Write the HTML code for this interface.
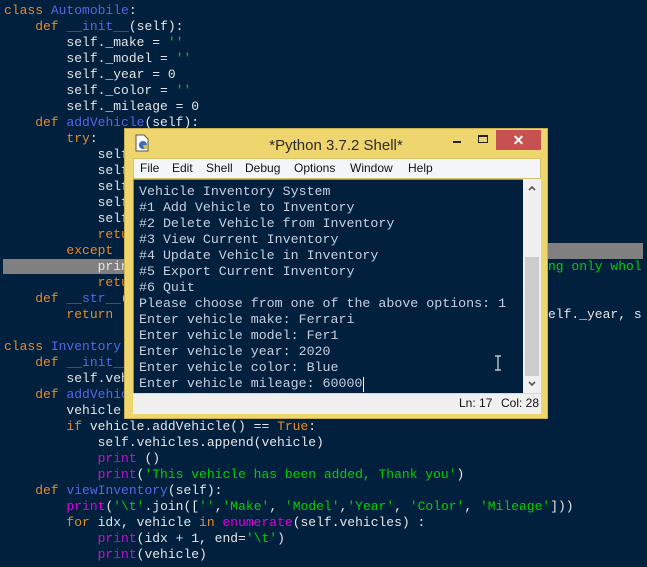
<!DOCTYPE html>
<html><head><meta charset="utf-8"><style>
*{margin:0;padding:0}
body{width:647px;height:567px;background:#00203e;position:relative;overflow:hidden;font-family:"Liberation Mono",monospace}
pre{position:absolute;left:4px;top:-13px;font:13px/16px "Liberation Mono",monospace;color:#e6e6e6;white-space:pre}
.k{color:#f08a1e}.b{color:#5566e8}.s{color:#00d000}.p{color:#e000e0}
.gr{position:absolute;background:#808080}
.abs{position:absolute;font:13px/16px "Liberation Mono",monospace;white-space:pre}
#win{position:absolute;left:124px;top:128px;width:424px;height:291px;background:#efd56e;border:1px solid #c9b050;box-sizing:border-box}
#title{position:absolute;left:0;right:0;top:8px;text-align:center;font:15px "Liberation Sans",sans-serif;color:#2b2b2b}
#close{position:absolute;left:371px;top:1px;width:45px;height:20px;background:#c75050;color:#fff;font:bold 14px/20px "Liberation Sans",sans-serif;text-align:center}
#menu{position:absolute;left:8px;top:29px;width:408px;height:21px;background:#f4f5f8;border:1px solid #d6c26a;box-sizing:border-box;font:12px/19px "Liberation Sans",sans-serif;color:#111}
#menu span{position:absolute;top:0}
#txt{position:absolute;left:8px;top:50px;width:390px;height:214px;background:#00203e;border-left:1px solid #7a8aa0;border-top:1px solid #7a8aa0;box-sizing:border-box}
#txt div{position:absolute;left:5px;top:4px;font:13.3px/16px "Liberation Mono",monospace;color:#c6d0e2;white-space:pre}
#sb{position:absolute;left:398px;top:50px;width:18px;height:214px;background:#f0f0f0}
#status{position:absolute;left:8px;top:264px;width:408px;height:20px;background:#f0f0f0;border-top:1px solid #d8d8d8;font:12px/19px "Liberation Sans",sans-serif;color:#111}
</style></head><body>
<div class="gr" style="left:3px;top:259px;width:121px;height:15px"></div>
<div class="gr" style="left:548px;top:243px;width:95px;height:16px"></div>
<pre><span class="s">  '                                      '      '</span>
<span class="k">class</span> <span class="b">Automobile</span>:
    <span class="k">def</span> <span class="b">__init__</span>(self):
        self._make = <span class="s">''</span>
        self._model = <span class="s">''</span>
        self._year = 0
        self._color = <span class="s">''</span>
        self._mileage = 0
    <span class="k">def</span> <span class="b">addVehicle</span>(self):
        <span class="k">try</span>:
            self
            self
            self
            self
            self
            <span class="k">return</span>
        <span class="k">except</span>
            print
            <span class="k">return</span>
    <span class="k">def</span> <span class="b">__str__</span>(self):
        <span class="k">return</span>

<span class="k">class</span> <span class="b">Inventory</span>:
    <span class="k">def</span> <span class="b">__init__</span>(self):
        self.vehicles = []
    <span class="k">def</span> <span class="b">addVehicle</span>(self):
        vehicle = Automobile()
        <span class="k">if</span> vehicle.addVehicle() == <span class="k">True</span>:
            self.vehicles.append(vehicle)
            <span class="p">print</span> ()
            <span class="p">print</span>(<span class="s">'This vehicle has been added, Thank you'</span>)
    <span class="k">def</span> <span class="b">viewInventory</span>(self):
        <span class="p">print</span>(<span class="s">'\t'</span>.join([<span class="s">''</span>,<span class="s">'Make'</span>, <span class="s">'Model'</span>,<span class="s">'Year'</span>, <span class="s">'Color'</span>, <span class="s">'Mileage'</span>]))
        <span class="k">for</span> idx, vehicle <span class="k">in</span> <span class="p">enumerate</span>(self.vehicles) :
            <span class="p">print</span>(idx + 1, end=<span class="s">'\t'</span>)
            <span class="p">print</span>(vehicle)</pre>
<div class="abs s" style="left:548px;top:259px">ng only whol</div>
<div class="abs" style="left:548px;top:307px;color:#e6e6e6">elf._year, s</div>
<div id="win">
 <svg style="position:absolute;left:10px;top:5px" width="17" height="18" viewBox="0 0 17 18"><path d="M1 1h8l4 4v12H1z" fill="#fff" stroke="#555"/><circle cx="8" cy="11" r="4" fill="#3a6cb0"/><path d="M8 11h4v4a4 4 0 0 1-4-4z" fill="#e0c030"/></svg>
 <div id="title">*Python 3.7.2 Shell*</div>
 <div style="position:absolute;left:328px;top:12px;width:8px;height:2px;background:#222"></div>
 <div style="position:absolute;left:353px;top:6px;width:8px;height:5px;border:1px solid #222;border-top-width:2px"></div>
 <div id="close">✕</div>
 <div id="menu"><span style="left:6px">File</span><span style="left:38px">Edit</span><span style="left:72px">Shell</span><span style="left:111px">Debug</span><span style="left:160px">Options</span><span style="left:216px">Window</span><span style="left:274px">Help</span></div>
 <div id="txt"><div>Vehicle Inventory System
#1 Add Vehicle to Inventory
#2 Delete Vehicle from Inventory
#3 View Current Inventory
#4 Update Vehicle in Inventory
#5 Export Current Inventory
#6 Quit
Please choose from one of the above options: 1
Enter vehicle make: Ferrari
Enter vehicle model: Fer1
Enter vehicle year: 2020
Enter vehicle color: Blue
Enter vehicle mileage: 60000</div>
  <div style="position:absolute;left:229px;top:197px;width:1px;height:15px;background:#fff;padding:0"></div>
  <svg style="position:absolute;left:360px;top:175px" width="8" height="16"><path d="M1 1h6M4 1v14M1 15h6" stroke="#ddd" stroke-width="1.2" fill="none"/></svg>
 </div>
 <div id="sb">
  <div style="position:absolute;left:2px;top:78px;width:14px;height:119px;background:#cdcdcd"></div>
  <svg style="position:absolute;left:5px;top:6px" width="8" height="6"><path d="M1 5l3-3 3 3" stroke="#555" stroke-width="1.6" fill="none"/></svg>
  <svg style="position:absolute;left:5px;top:202px" width="8" height="6"><path d="M1 1l3 3 3-3" stroke="#555" stroke-width="1.6" fill="none"/></svg>
 </div>
 <div id="status"><span style="position:absolute;left:326px">Ln: 17</span><span style="position:absolute;left:368px">Col: 28</span></div>
</div>
</body></html>
